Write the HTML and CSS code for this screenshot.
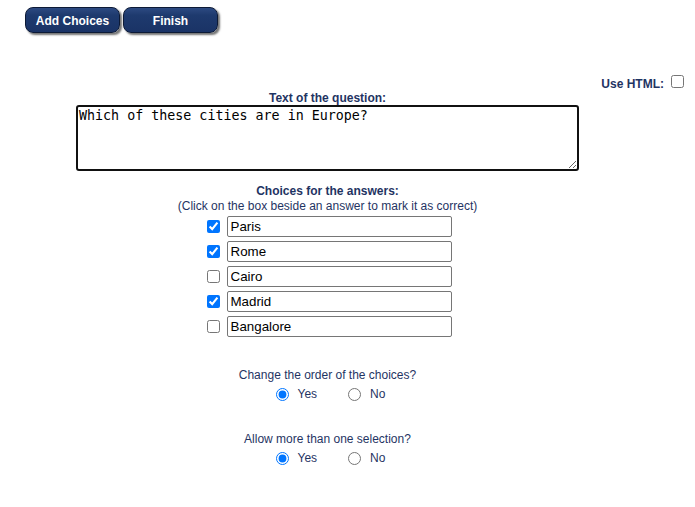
FILE: index.html
```html
<!DOCTYPE html>
<html lang="en">
<head>
    <meta charset="UTF-8">
    <title>Multiple choice question</title>
    <link rel="stylesheet" href="styles.css">
</head>
<body>
    <div class="toolbar">
        <button class="nav-button">Add Choices</button>
        <button class="nav-button">Finish</button>
    </div>

    <div class="html-toggle">
        <label for="useHtml">Use HTML:</label>
        <input type="checkbox" id="useHtml">
    </div>

    <div class="editor">
        <div class="label">Text of the question:</div>
        <textarea class="question-text">Which of these cities are in Europe?</textarea>

        <div class="choices-title">Choices for the answers:</div>
        <div class="hint">(Click on the box beside an answer to mark it as correct)</div>

        <div class="choices">
            <div class="choice"><input type="checkbox" checked><input type="text" value="Paris"></div>
            <div class="choice"><input type="checkbox" checked><input type="text" value="Rome"></div>
            <div class="choice"><input type="checkbox"><input type="text" value="Cairo"></div>
            <div class="choice"><input type="checkbox" checked><input type="text" value="Madrid"></div>
            <div class="choice"><input type="checkbox"><input type="text" value="Bangalore"></div>
        </div>

        <div class="option">
            <div class="question">Change the order of the choices?</div>
            <div class="radios">
                <label><input type="radio" name="shuffle" checked> Yes</label>
                <label><input type="radio" name="shuffle"> No</label>
            </div>
        </div>

        <div class="option">
            <div class="question">Allow more than one selection?</div>
            <div class="radios">
                <label><input type="radio" name="multi" checked> Yes</label>
                <label><input type="radio" name="multi"> No</label>
            </div>
        </div>
    </div>
</body>
</html>
```

FILE: styles.css
```css
* {
    box-sizing: border-box;
}

body {
    margin: 0;
    font-family: "Liberation Sans", Arial, sans-serif;
    font-size: 12px;
    line-height: 14px;
    color: #1f3463;
    background: white;
}

.toolbar {
    display: flex;
    gap: 3px;
    padding: 7px 0 0 25px;
}

.nav-button {
    width: 95px;
    height: 26px;
    margin: 0;
    padding: 1px 0 0 0;
    font-family: "Liberation Sans", Arial, sans-serif;
    font-size: 12px;
    font-weight: bold;
    color: white;
    background: linear-gradient(#2d4a82 0%, #1e3a6e 30%, #1a3366 100%);
    border: 1px solid #0d1a36;
    border-radius: 8px;
    box-shadow: 2px 2px 2px rgba(0, 0, 0, 0.55);
}

.html-toggle {
    display: flex;
    justify-content: flex-end;
    align-items: flex-start;
    gap: 7px;
    margin-top: 43px;
    padding-right: 11px;
    font-weight: bold;
}

.html-toggle label {
    margin-top: 1px;
}

.html-toggle input {
    width: 13px;
    height: 13px;
    margin: -1px 0 0 0;
}

.editor {
    width: 639px;
    margin-left: 8px;
    text-align: center;
}

.label {
    font-weight: bold;
}

.question-text {
    display: block;
    width: 503px;
    height: 66px;
    margin: 0 auto;
    padding: 1px 1px;
    font-family: "DejaVu Sans Mono", monospace;
    font-size: 13.33px;
    color: black;
    border: 2px solid #111;
    border-radius: 3px;
    resize: vertical;
}

.choices-title {
    margin-top: 13px;
    font-weight: bold;
}

.hint {
    margin-top: 1px;
}

.choices {
    display: flex;
    flex-direction: column;
    align-items: center;
    gap: 4px;
    margin-top: 3px;
    padding-left: 3px;
}

.choice {
    display: flex;
    align-items: center;
    gap: 7px;
}

.choice input[type="checkbox"] {
    width: 13px;
    height: 13px;
    margin: 0;
}

.choice input[type="text"] {
    width: 225px;
    height: 21px;
    margin: 0;
    padding: 1px 3px;
    font-family: "Liberation Sans", Arial, sans-serif;
    font-size: 13.33px;
    color: black;
    border: 1px solid #767676;
    border-radius: 2px;
}

.option {
    margin-top: 31px;
}

.option + .option {
    margin-top: 31px;
}

.radios {
    display: flex;
    justify-content: center;
    gap: 31px;
    margin-top: 5px;
    padding-left: 6px;
}

.radios label {
    display: flex;
    align-items: flex-start;
    gap: 6px;
}

.radios input {
    width: 13px;
    height: 13px;
    margin: 1px 3px 0 0;
}
```
